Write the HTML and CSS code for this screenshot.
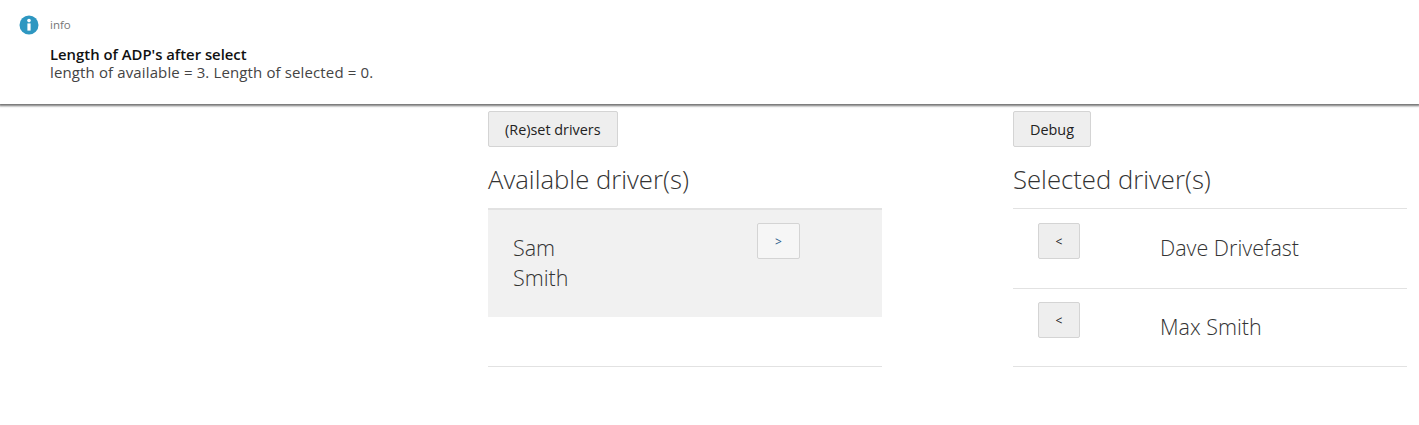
FILE: index.html
```html
<!DOCTYPE html>
<html lang="en">
<head>
    <meta charset="UTF-8">
    <meta name="viewport" content="width=device-width, initial-scale=1.0">
    <title>Drivers</title>
    <link rel="stylesheet" href="styles.css">
</head>
<body>
    <div class="toast">
        <div class="toast-head">
            <svg class="toast-icon" width="20" height="20" viewBox="0 0 20 20">
                <circle cx="10" cy="10" r="9.5" fill="#2e97c1"/>
                <rect x="8.4" y="8.4" width="3.2" height="7.2" fill="#fff"/>
                <circle cx="10" cy="5.6" r="1.8" fill="#fff"/>
            </svg>
            <span class="toast-level">info</span>
        </div>
        <div class="toast-title">Length of ADP's after select</div>
        <div class="toast-text">length of available = 3. Length of selected = 0.</div>
    </div>

    <div class="columns">
        <div class="column">
            <button class="btn" type="button">(Re)set drivers</button>
            <h2>Available driver(s)</h2>
            <div class="list available">
                <div class="row row-active">
                    <div class="name name-left">Sam<br>Smith</div>
                    <button class="btn btn-small btn-light" type="button">&gt;</button>
                </div>
                <div class="row-empty"></div>
            </div>
        </div>
        <div class="column">
            <button class="btn" type="button">Debug</button>
            <h2>Selected driver(s)</h2>
            <div class="list">
                <div class="row row-selected">
                    <button class="btn btn-small" type="button">&lt;</button>
                    <div class="name name-right">Dave Drivefast</div>
                </div>
                <div class="row row-selected row-last">
                    <button class="btn btn-small" type="button">&lt;</button>
                    <div class="name name-right">Max Smith</div>
                </div>
            </div>
        </div>
    </div>
</body>
</html>
```

FILE: styles.css
```css
body {
    margin: 0;
    padding: 0;
    background: #fff;
    font-family: "Open Sans", "Noto Sans", sans-serif;
    color: #333;
    overflow: hidden;
}
.toast {
    height: 104px;
    box-sizing: border-box;
    padding: 15px 20px 0;
    background: #fff;
    box-shadow: 0 1px 2px 1px rgba(0, 0, 0, 0.55);
}
.toast-head {
    display: flex;
    align-items: center;
    height: 20px;
}
.toast-icon {
    display: block;
    margin-left: -1px;
}
.toast-level {
    margin-left: 11px;
    margin-top: -2px;
    font-size: 11.5px;
    color: #767676;
}
.toast-title {
    margin: 9px 0 0 30px;
    font-size: 14.85px;
    line-height: 20px;
    font-weight: 600;
    color: #111;
}
.toast-text {
    margin-left: 30px;
    margin-top: -2px;
    font-size: 15px;
    line-height: 20px;
    letter-spacing: 0.13px;
    color: #444;
}
.columns {
    display: grid;
    grid-template-columns: 394px 394px;
    column-gap: 131px;
    padding: 7px 0 0 488px;
}
.btn {
    display: block;
    height: 36px;
    padding: 0 16px;
    font-family: inherit;
    font-size: 14.4px;
    color: #222;
    background: #eee;
    border: 1px solid #d4d4d4;
    border-radius: 2px;
}
.btn-small {
    width: 42px;
    padding: 0;
    font-size: 12px;
}
.btn-light {
    width: 43px;
    background: #f6f6f6;
    color: #2a5d8a;
}
h2 {
    margin: 16px 0 12px;
    font-size: 25.7px;
    line-height: 33px;
    font-weight: 300;
    color: #333;
}
.list {
    border-top: 1px solid #e2e2e2;
}
.available {
    border-top: 2px solid #e2e2e2;
}
.row {
    display: flex;
    align-items: flex-start;
    box-sizing: border-box;
    padding: 14px 25px 0;
    border-bottom: 1px solid #e2e2e2;
}
.row-active {
    height: 107px;
    padding-top: 13px;
    background: #f1f1f1;
    border-bottom: none;
}
.row-selected {
    height: 80px;
}
.row-last {
    height: 78px;
    padding-top: 13px;
}
.row-empty {
    height: 49px;
    border-bottom: 1px solid #e2e2e2;
}
.name {
    font-size: 21.5px;
    line-height: 30px;
    font-weight: 300;
    color: #333;
    padding-top: 10px;
}
.name-left {
    width: 244px;
}
.name-right {
    margin-left: 80px;
}
```
